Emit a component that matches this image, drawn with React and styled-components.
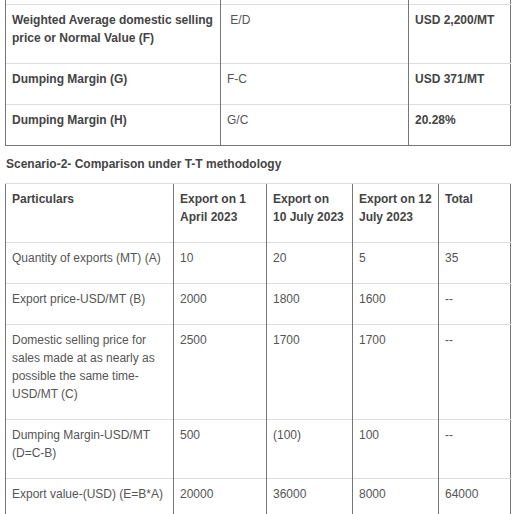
import React from "react";
import styled, { createGlobalStyle } from "styled-components";

const Global = createGlobalStyle`
  html, body { margin: 0; padding: 0; background: #fff; }
  body { font-family: "Liberation Sans", Arial, sans-serif; }
`;

const Page = styled.div`
  padding: 0 4px 0 5px;
  width: 514px;
  box-sizing: border-box;
  color: #555;
  font-size: 12px;
  line-height: 18px;
`;

const Table = styled.table`
  width: 505px;
  border-collapse: collapse;
  table-layout: fixed;
  border-right: 1px solid #777;
  border-bottom: ${(p) => (p.$closed ? "1px solid #777" : "none")};
`;

const Col = styled.col`
  width: ${(p) => p.$w}px;
`;

const Cell = styled.td`
  border-left: 1px solid #777;
  border-top: 1px solid #ddd;
  padding: 6px 6px 16px 6px;
  vertical-align: top;
  text-align: left;
  font-weight: ${(p) => (p.$bold ? 700 : 400)};
  color: ${(p) => (p.$bold ? "#444" : "#555")};
`;

const StubCell = styled.td`
  border-left: 1px solid #777;
  border-top: none;
  height: 4px;
  padding: 0;
`;

const Heading = styled.p`
  margin: 9px 0 10px 1px;
  font-weight: 700;
  color: #444;
`;

const t1 = [
  ["Weighted Average domestic selling price or Normal Value (F)", "\u00a0E/D", "USD 2,200/MT"],
  ["Dumping Margin (G)", "F-C", "USD 371/MT"],
  ["Dumping Margin (H)", "G/C", "20.28%"],
];

const t2head = [
  "Particulars",
  "Export on 1 April 2023",
  <>Export on<br />10 July 2023</>,
  "Export on 12 July 2023",
  "Total",
];
const t2 = [
  ["Quantity of exports (MT) (A)", "10", "20", "5", "35"],
  ["Export price-USD/MT (B)", "2000", "1800", "1600", "--"],
  ["Domestic selling price for sales made at as nearly as possible the same time-USD/MT (C)", "2500", "1700", "1700", "--"],
  ["Dumping Margin-USD/MT (D=C-B)", "500", "(100)", "100", "--"],
  ["Export value-(USD) (E=B*A)", "20000", "36000", "8000", "64000"],
];

export default function App() {
  return (
    <>
      <Global />
      <Page>
        <Table $closed>
          <colgroup>
            <Col $w={215} />
            <Col $w={188} />
            <Col $w={102} />
          </colgroup>
          <tbody>
            <tr>
              <StubCell />
              <StubCell />
              <StubCell />
            </tr>
            {t1.map((r, i) => (
              <tr key={i}>
                <Cell $bold>{r[0]}</Cell>
                <Cell>{r[1]}</Cell>
                <Cell $bold>{r[2]}</Cell>
              </tr>
            ))}
          </tbody>
        </Table>
        <Heading>Scenario-2- Comparison under T-T methodology</Heading>
        <Table>
          <colgroup>
            <Col $w={168} />
            <Col $w={93} />
            <Col $w={86} />
            <Col $w={86} />
            <Col $w={72} />
          </colgroup>
          <tbody>
            <tr>
              {t2head.map((h, i) => (
                <Cell key={i} $bold>{h}</Cell>
              ))}
            </tr>
            {t2.map((r, i) => (
              <tr key={i}>
                {r.map((c, j) => (
                  <Cell key={j}>{c}</Cell>
                ))}
              </tr>
            ))}
          </tbody>
        </Table>
      </Page>
    </>
  );
}
